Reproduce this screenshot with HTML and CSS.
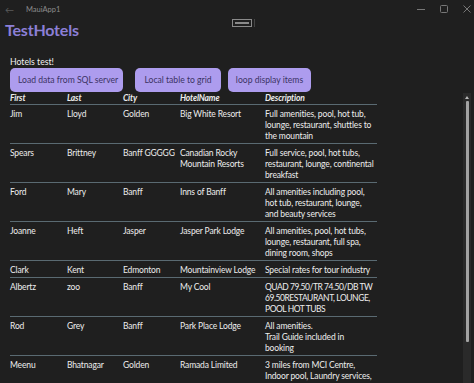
FILE: index.html
```html
<!DOCTYPE html>
<html lang="en">
<head>
	<meta charset="utf-8">
	<title>MauiApp1</title>
	<link rel="stylesheet" href="styles.css">
</head>
<body>
	<div class="window">

		<!-- title bar -->
		<div class="titlebar">
			<span class="back">&#8592;</span>
			<span class="apptitle">MauiApp1</span>
			<div class="wincontrols">
				<svg width="10" height="10" viewBox="0 0 10 10"><line x1="1" y1="5.5" x2="9" y2="5.5" stroke="#777" stroke-width="1"/></svg>
				<svg width="10" height="10" viewBox="0 0 10 10"><rect x="1.5" y="1.5" width="7" height="7" rx="1" fill="none" stroke="#777" stroke-width="1"/></svg>
				<svg width="10" height="10" viewBox="0 0 10 10"><path d="M1.5 1.5 L8.5 8.5 M8.5 1.5 L1.5 8.5" stroke="#777" stroke-width="1"/></svg>
			</div>
		</div>

		<div class="header">
			<h1 class="pagetitle">TestHotels</h1>
			<svg class="toolbar" width="24" height="10" viewBox="0 0 24 10">
				<rect x="0.5" y="1.5" width="19" height="7" fill="none" stroke="#8a8a8a" stroke-width="1"/>
				<rect x="3" y="4" width="14" height="2" fill="#8a8a8a"/>
				<line x1="22.5" y1="1" x2="22.5" y2="9" stroke="#444" stroke-width="1"/>
			</svg>
		</div>

		<div class="content">
			<div class="intro">Hotels test!</div>

			<div class="buttons">
				<button class="btn btn-load">Load data from SQL server</button>
				<button class="btn btn-local">Local table to grid</button>
				<button class="btn btn-loop">loop display items</button>
			</div>

			<div class="scrollarea">
				<div class="grid">
					<div class="row head">
						<div>First</div><div>Last</div><div>City</div><div>HotelName</div><div>Description</div>
					</div>
					<div class="row">
						<div>Jim</div><div>Lloyd</div><div>Golden</div><div>Big White Resort</div>
						<div>Full amenities, pool, hot tub, lounge, restaurant, shuttles to the mountain</div>
					</div>
					<div class="row">
						<div>Spears</div><div>Brittney</div><div>Banff GGGGG</div><div>Canadian Rocky Mountain Resorts</div>
						<div>Full service, pool, hot tubs, restaurant, lounge, continental breakfast</div>
					</div>
					<div class="row">
						<div>Ford</div><div>Mary</div><div>Banff</div><div>Inns of Banff</div>
						<div>All amenities including pool, hot tub, restaurant, lounge, and beauty services</div>
					</div>
					<div class="row">
						<div>Joanne</div><div>Heft</div><div>Jasper</div><div>Jasper Park Lodge</div>
						<div>All amenities, pool, hot tubs, lounge, restaurant, full spa, dining room, shops</div>
					</div>
					<div class="row">
						<div>Clark</div><div>Kent</div><div>Edmonton</div><div>Mountainview Lodge</div>
						<div>Special rates for tour industry</div>
					</div>
					<div class="row">
						<div>Albertz</div><div>zoo</div><div>Banff</div><div>My Cool</div>
						<div class="caps">QUAD 79.50/TR 74.50/DB TW 69.50RESTAURANT, LOUNGE, POOL HOT TUBS</div>
					</div>
					<div class="row">
						<div>Rod</div><div>Grey</div><div>Banff</div><div>Park Place Lodge</div>
						<div>All amenities.<br>Trail Guide included in booking</div>
					</div>
					<div class="row">
						<div>Meenu</div><div>Bhatnagar</div><div>Golden</div><div>Ramada Limited</div>
						<div>3 miles from MCI Centre, Indoor pool, Laundry services, Continental Breakfast, Voice mail</div>
					</div>
				</div>

				<div class="scrollbar">
					<div class="arrow"></div>
					<div class="thumb"></div>
				</div>
			</div>
		</div>

	</div>
</body>
</html>
```

FILE: styles.css
```css
html, body {
	margin: 0;
	padding: 0;
	background: #1f1f1f;
}
body {
	width: 474px;
	height: 383px;
	overflow: hidden;
	font-family: "Lato", "Open Sans", sans-serif;
	color: #e8e8e8;
}

.window {
	height: 383px;
	display: flex;
	flex-direction: column;
}

/* title bar */
.titlebar {
	height: 18px;
	flex-shrink: 0;
	display: flex;
	align-items: center;
	font-size: 7.5px;
	color: #8c8c8c;
}
.back {
	width: 10px;
	margin-left: 5px;
	color: #5c5c5c;
	font-size: 9px;
}
.apptitle {
	margin-left: 11px;
}
.wincontrols {
	margin-left: auto;
	display: flex;
	gap: 13px;
	margin-right: 2px;
}

.header {
	position: relative;
	height: 24px;
	flex-shrink: 0;
}
.pagetitle {
	margin: 0 0 0 5px;
	font-size: 16px;
	line-height: 24px;
	font-weight: 700;
	color: #8c7fd6;
	letter-spacing: -0.2px;
}
.toolbar {
	position: absolute;
	left: 232px;
	top: 0;
}

.content {
	flex: 1;
	display: flex;
	flex-direction: column;
	padding-left: 10px;
	min-height: 0;
}
.intro {
	margin-top: 14px;
	font-size: 8.7px;
	line-height: 12px;
	color: #f0f0f0;
}

.buttons {
	display: flex;
	flex-shrink: 0;
	height: 24px;
}
.btn {
	border: none;
	border-radius: 5px;
	background: #ad9cee;
	color: #3b3363;
	font-family: "Lato", "Open Sans", sans-serif;
	font-size: 8.6px;
	padding: 0 6px;
	height: 24px;
	white-space: nowrap;
	overflow: hidden;
}
.btn-load {
	width: 113px;
	text-align: left;
	padding-left: 8px;
}
.btn-local {
	width: 86px;
	margin-left: 12px;
}
.btn-loop {
	width: 83px;
	margin-left: 7px;
}

.scrollarea {
	flex: 1;
	display: flex;
	margin-top: 1px;
	min-height: 0;
}

.grid {
	width: 367px;
	font-size: 8.5px;
	letter-spacing: -0.15px;
	line-height: 11px;
	color: #ededed;
}
.row {
	display: grid;
	grid-template-columns: 57px 56px 57px 85px 112px;
	border-bottom: 1px solid #5a6a72;
	padding: 4px 0 1px 0;
}
.row.head {
	font-weight: 700;
	font-style: italic;
	padding: 0;
}
.row > div {
	padding-right: 3px;
}
.row > .caps {
	letter-spacing: -0.45px;
}

.scrollbar {
	margin-left: auto;
	margin-right: 3px;
	width: 8px;
	background: #2a2a2a;
	display: flex;
	flex-direction: column;
	align-items: center;
}
.arrow {
	width: 0;
	height: 0;
	margin-top: 3px;
	border-left: 2px solid transparent;
	border-right: 2px solid transparent;
	border-bottom: 3px solid #b8b8b8;
}
.thumb {
	width: 3px;
	height: 241px;
	margin-top: 2px;
	background: #a3a3a3;
	border-radius: 1px;
}
```
